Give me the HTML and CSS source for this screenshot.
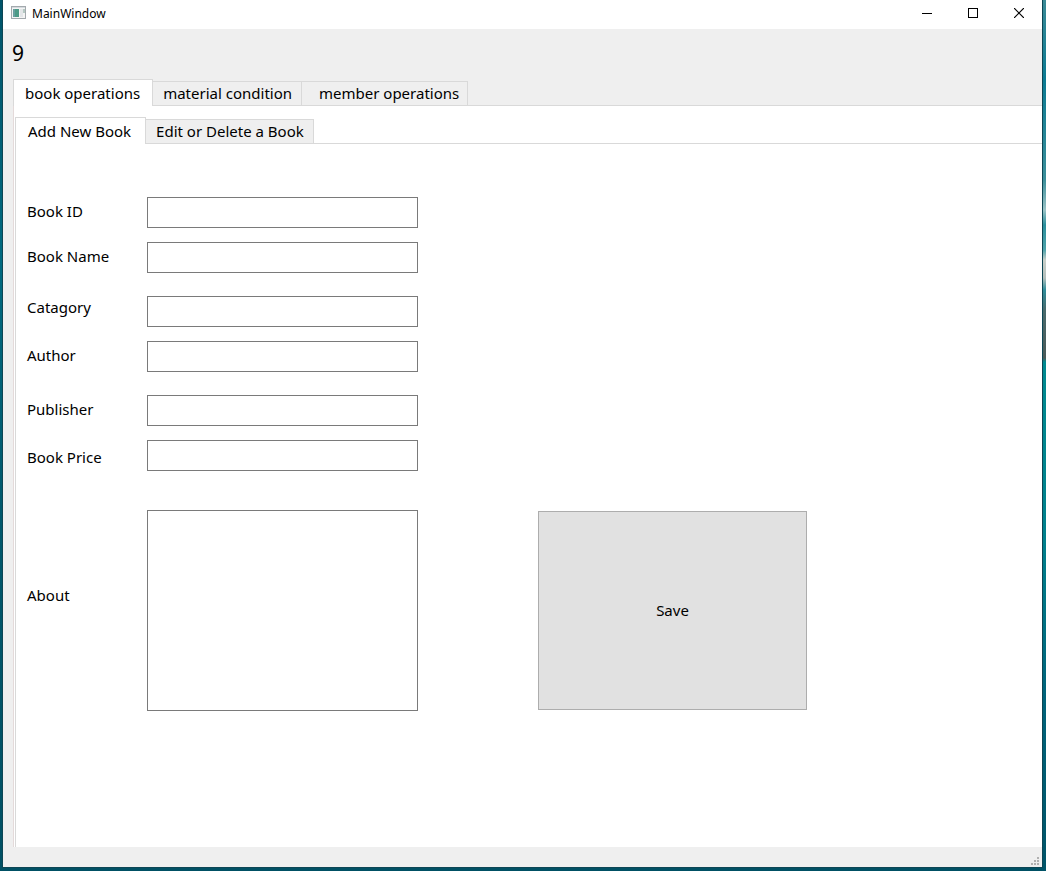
FILE: index.html
```html
<!DOCTYPE html>
<html lang="en">
<head>
<meta charset="UTF-8">
<meta name="viewport" content="width=device-width, initial-scale=1.0">
<title>MainWindow</title>
<link rel="stylesheet" href="styles.css">
</head>
<body>
<div class="window">
  <header class="titlebar">
    <svg class="app-icon" width="16" height="14" viewBox="0 0 16 14">
      <rect x="0.5" y="0.5" width="14" height="12" fill="#f4f4f4" stroke="#a3a9ad"/>
      <rect x="1" y="1" width="13" height="1" fill="#d5dade"/>
      <rect x="2" y="3" width="6" height="8" fill="#4c9a86"/>
      <rect x="2" y="3" width="2" height="8" fill="#6a9fa0"/>
      <rect x="9" y="3" width="3" height="8" fill="#e3e6e8"/>
      <rect x="12" y="3" width="2" height="4" fill="#b4c8c2"/>
    </svg>
    <span class="title">MainWindow</span>
    <div class="window-buttons">
      <button type="button" aria-label="Minimize">
        <svg width="10" height="10" viewBox="0 0 10 10"><path d="M0 5.5H10" stroke="#000"/></svg>
      </button>
      <button type="button" aria-label="Maximize">
        <svg width="10" height="10" viewBox="0 0 10 10"><rect x="0.5" y="0.5" width="9" height="9" fill="none" stroke="#000"/></svg>
      </button>
      <button type="button" aria-label="Close">
        <svg width="10" height="10" viewBox="0 0 10 10"><path d="M0 0L10 10M10 0L0 10" stroke="#000" stroke-width="1.2"/></svg>
      </button>
    </div>
  </header>

  <div class="counter">9</div>

  <main class="outer">
    <nav class="tabs" role="tablist">
      <button type="button" class="tab active" role="tab" aria-selected="true">book operations</button>
      <button type="button" class="tab" role="tab">material condition</button>
      <button type="button" class="tab tab-wide" role="tab">member operations</button>
    </nav>
    <div class="outer-pane">
      <nav class="tabs inner-tabs" role="tablist">
        <button type="button" class="tab active" role="tab" aria-selected="true">Add New Book</button>
        <button type="button" class="tab" role="tab">Edit or Delete a Book</button>
      </nav>
      <form class="book-form">
        <div class="pair">
          <div class="row">
            <label for="book_id">Book ID</label>
            <input type="text" id="book_id" name="book_id">
          </div>
          <div class="row">
            <label for="book_name">Book Name</label>
            <input type="text" id="book_name" name="book_name">
          </div>
        </div>
        <div class="pair">
          <div class="row label-high">
            <label for="catagory">Catagory</label>
            <input type="text" id="catagory" name="catagory">
          </div>
          <div class="row">
            <label for="author">Author</label>
            <input type="text" id="author" name="author">
          </div>
        </div>
        <div class="pair">
          <div class="row">
            <label for="publisher">Publisher</label>
            <input type="text" id="publisher" name="publisher">
          </div>
          <div class="row label-low">
            <label for="book_price">Book Price</label>
            <input type="text" id="book_price" name="book_price">
          </div>
        </div>
        <div class="row about">
          <label for="about">About</label>
          <textarea id="about" name="about"></textarea>
          <button type="button" class="save">Save</button>
        </div>
      </form>
    </div>
  </main>

  <footer class="statusbar">
    <svg width="9" height="9" viewBox="0 0 9 9" fill="#b0b0b0">
      <rect x="6" y="0" width="2" height="2"/>
      <rect x="3" y="3" width="2" height="2"/>
      <rect x="6" y="3" width="2" height="2"/>
      <rect x="0" y="6" width="2" height="2"/>
      <rect x="3" y="6" width="2" height="2"/>
      <rect x="6" y="6" width="2" height="2"/>
    </svg>
  </footer>
</div>
</body>
</html>
```
FILE: styles.css
```css
* {
  box-sizing: border-box;
}

/* desktop showing round the window */
body {
  margin: 0;
  padding: 0 4px 4px 3px;
  min-height: 100vh;
  display: flex;
  font-family: "Noto Sans", Tahoma, sans-serif;
  font-size: 15px;
  line-height: 23px;
  color: #000;
  background:
    linear-gradient(#3b8a96 0, #0b7a92 80px, #3c8f9a 180px, #9cc3c6 210px, #2a8f9c 225px, #4fa3aa 250px, #c9cfc9 260px, #b5bfbb 278px, #2f8d9a 290px, #4a6a6c 310px, #4b5a58 358px, #008a90 362px, #00808c 540px, #00637a 700px, #005468 867px) right top / 4px 100% no-repeat,
    linear-gradient(#00546a, #006a80 30%, #00586c 60%, #005064);
}

.window {
  flex: 1;
  display: flex;
  flex-direction: column;
  background: #efefef;
  box-shadow: 0 0 0 1px #0d4654;
}

.titlebar {
  display: flex;
  align-items: center;
  height: 29px;
  padding-left: 8px;
  padding-bottom: 3px;
  background: #fff;
}

.title {
  margin-left: 5px;
  font-size: 12px;
}

.window-buttons {
  display: flex;
  margin-left: auto;
}

.window-buttons button {
  display: flex;
  align-items: center;
  justify-content: center;
  width: 46px;
  height: 26px;
  padding: 0;
  border: none;
  background: none;
}

.window-buttons button:hover {
  background: #e5e5e5;
}

.counter {
  height: 50px;
  padding-left: 9px;
  font-size: 21px;
  line-height: 48px;
}

.outer {
  flex: 1;
  display: flex;
  flex-direction: column;
  margin-left: 10px;
}

.tabs {
  display: flex;
  align-items: flex-end;
  box-shadow: inset 0 -1px #d9d9d9;
}

.tab {
  height: 25px;
  padding: 0 9px 0 10px;
  border: 1px solid #d9d9d9;
  border-left: none;
  background: #efefef;
  color: #000;
  font: inherit;
}

.tab.active {
  height: 27px;
  padding: 0 12px 0 11px;
  border-left: 1px solid #d9d9d9;
  border-bottom: none;
  background: #fff;
}

.tab-wide {
  padding: 0 8px 0 17px;
}

.inner-tabs .tab.active {
  padding: 0 14px 0 12px;
}

.outer-pane {
  flex: 1;
  padding: 11px 0 0 1px;
  border-left: 1px solid #e4dada;
  background: #fff;
  display: flex;
  flex-direction: column;
}

.book-form {
  flex: 1;
  display: flex;
  flex-direction: column;
  gap: 23px;
  padding: 53px 11px 20px;
  border-left: 1px solid #d9d9d9;
}

.pair {
  display: flex;
  flex-direction: column;
  gap: 14px;
}

.row {
  display: flex;
  align-items: center;
}

.row.label-high {
  align-items: flex-start;
}

.row.label-low {
  align-items: flex-end;
}

.row label {
  width: 120px;
  padding-bottom: 2px;
}

.row input,
.row textarea {
  width: 271px;
  border: 1px solid #7a7a7a;
  border-radius: 0;
  background: #fff;
  font: inherit;
}

.row input {
  height: 31px;
  padding: 0 4px;
}

.row textarea {
  height: 201px;
  padding: 4px;
  resize: none;
}

.row input:focus,
.row textarea:focus {
  outline: none;
  border-color: #0078d7;
}

.about {
  margin-top: 16px;
}

.about label {
  padding-bottom: 30px;
}

.save {
  width: 269px;
  height: 199px;
  margin-left: 120px;
  border: 1px solid #adadad;
  background: #e1e1e1;
  color: #000;
  font: inherit;
}

.save:hover {
  border-color: #0078d7;
  background: #e5f1fb;
}

.statusbar {
  display: flex;
  align-items: flex-end;
  justify-content: flex-end;
  height: 20px;
  padding: 0 2px 1px;
}
```
